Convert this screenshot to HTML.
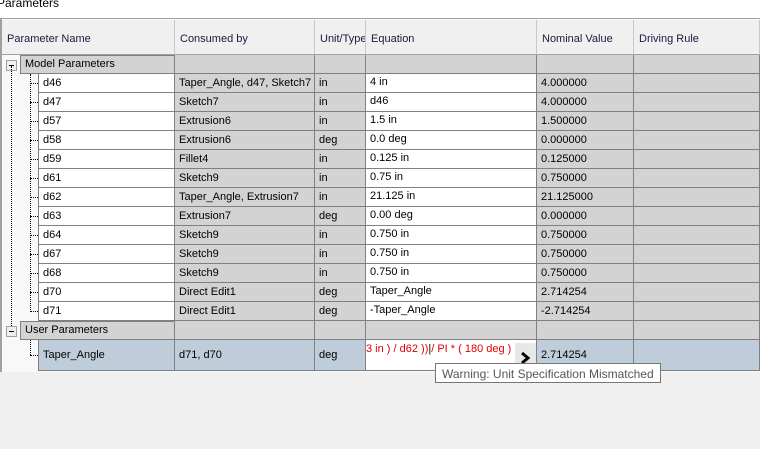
<!DOCTYPE html><html><head><style>
body{margin:0;width:760px;height:449px;background:#f0f0f0;font-family:"Liberation Sans",Tahoma,sans-serif;font-size:11px;color:#000;position:relative;overflow:hidden}
.a{position:absolute;box-sizing:border-box}
.c{position:absolute;box-sizing:border-box;border-right:1px solid #808080;border-bottom:1px solid #808080;padding:3px 0 0 4px;white-space:nowrap;overflow:hidden;height:19px}
.w{background:#fff}.g{background:#d3d3d3}.s{background:#bfcddb}
.h{position:absolute;top:20px;height:35px;background:#f0f0f0;border-right:1px solid #c8c8c8;border-bottom:1px solid #a0a0a0;padding:13px 0 0 5px;box-sizing:border-box;color:#1a1a40;white-space:nowrap;overflow:hidden}
.dv{position:absolute;border-left:1px dotted #000}
.dh{position:absolute;border-top:1px dotted #000;height:0}
</style></head><body>
<div class="a" style="left:0;top:0;width:760px;height:19px;background:#fff;border-bottom:1px solid #a0a0a0"></div>
<div class="a" style="left:-3px;top:-4px;font-size:12px">Parameters</div>
<div class="a" style="left:0;top:19px;width:760px;height:353px;background:#f8f8f8;border-left:2px solid #a0a0a0"></div>
<div class="h" style="left:2px;width:173px">Parameter Name</div>
<div class="h" style="left:175px;width:140px">Consumed by</div>
<div class="h" style="left:315px;width:51px">Unit/Type</div>
<div class="h" style="left:366px;width:171px">Equation</div>
<div class="h" style="left:537px;width:97px">Nominal Value</div>
<div class="h" style="left:634px;width:126px">Driving Rule</div>
<div id="rows"></div>
<script>
var d=[["d46","Taper_Angle, d47, Sketch7","in","4 in","4.000000"],["d47","Sketch7","in","d46","4.000000"],["d57","Extrusion6","in","1.5 in","1.500000"],["d58","Extrusion6","deg","0.0 deg","0.000000"],["d59","Fillet4","in","0.125 in","0.125000"],["d61","Sketch9","in","0.75 in","0.750000"],["d62","Taper_Angle, Extrusion7","in","21.125 in","21.125000"],["d63","Extrusion7","deg","0.00 deg","0.000000"],["d64","Sketch9","in","0.750 in","0.750000"],["d67","Sketch9","in","0.750 in","0.750000"],["d68","Sketch9","in","0.750 in","0.750000"],["d70","Direct Edit1","deg","Taper_Angle","2.714254"],["d71","Direct Edit1","deg","-Taper_Angle","-2.714254"]];
var h="";
function cell(x,y,w,hh,cls,t,st){return '<div class="c '+cls+'" style="left:'+x+'px;top:'+y+'px;width:'+w+'px;height:'+hh+'px;'+(st||'')+'">'+t+'</div>';}
function grp(y,t){h+=cell(20,y,155,19,'g',t,'border-left:1px solid #808080;border-top:1px solid #808080;padding-top:2px');h+=cell(175,y,140,19,'g','');h+=cell(315,y,51,19,'g','');h+=cell(366,y,171,19,'g','');h+=cell(537,y,97,19,'g','');h+=cell(634,y,126,19,'g','');
h+='<div class="a" style="left:6px;top:'+(y+5)+'px;width:11px;height:11px;border:1px solid #a0a0a0;background:#f0f0f0"></div><div class="a" style="left:9px;top:'+(y+10)+'px;width:5px;height:1px;background:#000"></div>';}
grp(55,"Model Parameters");
for(var i=0;i<d.length;i++){var y=74+i*19,r=d[i];
h+=cell(38,y,137,19,'w',r[0],'border-left:1px solid #808080');h+=cell(175,y,140,19,'g',r[1]);h+=cell(315,y,51,19,'g',r[2]);h+=cell(366,y,171,19,'w',r[3],'padding-top:2px');h+=cell(537,y,97,19,'g',r[4]);h+=cell(634,y,126,19,'g','');
h+='<div class="dh" style="left:30px;top:'+(y+9)+'px;width:8px"></div>';}
h+='<div class="dv" style="left:11px;top:66px;height:260px"></div><div class="dv" style="left:30px;top:74px;height:236px"></div>';
grp(321,"User Parameters");
var y=340;
h+=cell(38,y,137,31,'s','Taper_Angle','border-left:1px solid #808080;padding-top:9px');h+=cell(175,y,140,31,'s','d71, d70','padding-top:9px');h+=cell(315,y,51,31,'s','deg','padding-top:9px');
h+=cell(366,y,171,31,'w','<span style="color:#e00000;margin-left:-4px">3 in ) / d62 ))<span style="color:#000">|</span>/ PI * ( 180 deg )</span>','padding-top:3px');
h+='<div class="a" style="left:515px;top:343px;width:21px;height:27px;background:#e8e8e8"><svg width="21" height="27" style="position:absolute;left:0;top:0"><path d="M7 10 L13 15 L7 20" stroke="#000" stroke-width="3" fill="none"/></svg></div>';
h+=cell(537,y,97,31,'s','2.714254','padding-top:9px');h+=cell(634,y,126,31,'s','');
h+='<div class="dv" style="left:30px;top:340px;height:15px"></div><div class="dh" style="left:30px;top:355px;width:8px"></div>';
document.getElementById('rows').innerHTML=h;
</script>
<div class="a" style="left:435px;top:363px;width:226px;height:20px;background:#fff;border:1px solid #767676;color:#555;font-size:12px;padding:3px 0 0 6px;white-space:nowrap">Warning: Unit Specification Mismatched</div>
</body></html>
